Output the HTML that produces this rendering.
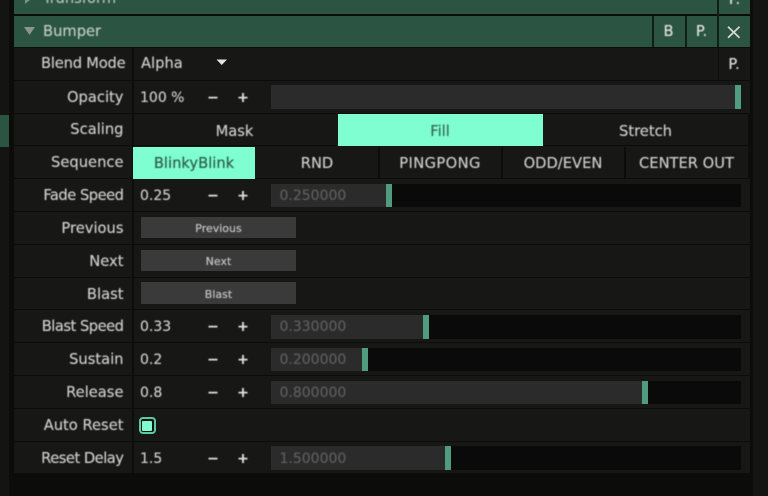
<!DOCTYPE html>
<html><head><meta charset="utf-8"><style>
html,body{margin:0;padding:0;background:#0c0c0c}
#p{position:relative;width:768px;height:496px;overflow:hidden;background:#0c0c0b;font-family:"DejaVu Sans","Liberation Sans",sans-serif;font-size:14.7px;color:#cbcbcb}
#p div{position:absolute}
.t{white-space:nowrap;filter:blur(.4px);line-height:20px;height:20px;transform:translateY(1px);text-shadow:0 0 .4px currentColor}
.l{right:644.5px;text-align:right}
.n{letter-spacing:-.5px}
.c{text-align:center}
.r{left:14px;width:736px;height:31.8px;background:#171716}
.sl{left:271px;width:470px;height:23.6px;background:#0a0a0a}
.f{left:271px;height:23.6px;background:#2b2b2b}
.h{width:6px;height:23.6px;background:#4f9c7e}
.v{left:140px;font-size:14px}
.g{left:279.5px;color:#5e5e5e;font-size:14px}
.b{left:141px;width:155px;height:21.6px;background:#3a3a3a}
.s{top:0;width:2px;background:#0c0c0b}
.x{font-size:11px;left:141px;width:155px;text-align:center;color:#c4c4c4}
.m{font-size:14px;font-weight:bold;color:#ddd}
</style></head><body><div id="p">
<div style="left:0;top:0;width:9px;height:496px;background:#141413"></div>
<div style="left:0;top:115px;width:9px;height:32px;background:#2c5443"></div>
<div style="left:753px;top:0;width:15px;height:496px;background:#141413"></div>

<div style="left:14px;top:0;width:736px;height:14px;background:#2b5442"></div>
<div style="left:14px;top:16px;width:736px;height:31px;background:#2b5442"></div>
<div style="left:717px;top:0;width:2px;height:47px;background:#0e1f18"></div>
<div style="left:652px;top:16px;width:2px;height:31px;background:#0e1f18"></div>
<div style="left:685px;top:16px;width:2px;height:31px;background:#0e1f18"></div>
<div class="t" style="left:43px;top:-12px;color:#b5bcb8">Transform</div>
<svg style="position:absolute;left:24px;top:0" width="10" height="5"><path d="M1 0H6L1 4Z" fill="#7d8f87"/></svg>
<svg style="position:absolute;left:23px;top:27px" width="13" height="10"><path d="M1 0H12L6.5 8Z" fill="#8a9490"/></svg>
<div class="t" style="left:43px;top:21px;color:#bfc9c4">Bumper</div>
<div class="t c" style="left:652px;width:33px;top:21px;color:#e0e0e0">B</div>
<div class="t c" style="left:685px;width:33px;top:21px;color:#e0e0e0">P.</div>
<div class="t c" style="left:718px;width:33px;top:-11px;color:#e0e0e0">P.</div>
<svg style="position:absolute;left:727px;top:26px" width="14" height="13"><path d="M1 .8L12.5 11.8M12.5 .8L1 11.8" stroke="#d8d8d8" stroke-width="1.7" fill="none"/></svg>

<div class="r" style="top:48px"></div>
<div class="r" style="top:80.8px"></div>
<div class="r" style="top:113.6px"></div>
<div class="r" style="top:146.4px"></div>
<div class="r" style="top:179.2px"></div>
<div class="r" style="top:212px"></div>
<div class="r" style="top:244.8px"></div>
<div class="r" style="top:277.6px"></div>
<div class="r" style="top:310.4px"></div>
<div class="r" style="top:343.2px"></div>
<div class="r" style="top:376px"></div>
<div class="r" style="top:408.8px"></div>
<div class="r" style="top:441.6px"></div>

<div style="left:132px;top:48px;width:1.5px;height:425px;background:#0d0d0c"></div>
<div style="left:717.5px;top:47px;width:1.5px;height:33px;background:#0d0d0c"></div>
<div style="left:748px;top:114px;width:2px;height:65px;background:#0d0d0c"></div>

<div class="t" style="left:41px;top:53px;letter-spacing:-.2px">Blend Mode</div>
<div class="t" style="left:141px;top:53px">Alpha</div>
<svg style="position:absolute;left:216px;top:59px" width="12" height="7"><path d="M.5 .5H11L5.7 6Z" fill="#e4e4e4"/></svg>
<div class="t c" style="left:718px;width:32px;top:54px;color:#ddd">P.</div>

<div class="t l" style="top:87px">Opacity</div>
<div class="t v" style="top:87px">100 %</div>
<div class="sl f" style="top:85px;width:470px"></div>
<div class="h" style="left:735px;top:85px"></div>

<div class="t l" style="top:119px">Scaling</div>
<div style="left:338px;top:114px;width:204.5px;height:31.5px;background:#7fffd1"></div>
<div class="t c" style="left:132px;width:205px;top:120.5px">Mask</div>
<div class="t c" style="left:338px;width:204px;top:120.5px;color:#3a6a58">Fill</div>
<div class="t c" style="left:543px;width:205px;top:120.5px">Stretch</div>

<div class="t l" style="top:152px">Sequence</div>
<div style="left:133px;top:147px;width:122px;height:31.5px;background:#7fffd1"></div>
<div class="s" style="left:378px;top:147px;height:32px"></div>
<div class="s" style="left:501px;top:147px;height:32px"></div>
<div class="s" style="left:624px;top:147px;height:32px"></div>
<div class="t c" style="left:133px;width:122px;top:153px;color:#2e5f4e">BlinkyBlink</div>
<div class="t c" style="left:256px;width:122px;top:153px">RND</div>
<div class="t c" style="left:379px;width:122px;top:153px;letter-spacing:.4px">PINGPONG</div>
<div class="t c" style="left:502px;width:122px;top:153px">ODD/EVEN</div>
<div class="t c" style="left:625px;width:123px;top:153px">CENTER OUT</div>

<div class="t l n" style="top:185px">Fade Speed</div>
<div class="t v" style="top:185px">0.25</div>
<div class="sl" style="top:183.5px"></div>
<div class="f" style="top:183.5px;width:115px"></div>
<div class="h" style="left:386px;top:183.5px"></div>
<div class="t g" style="top:185px">0.250000</div>

<div class="t l" style="top:218px">Previous</div>
<div class="b" style="top:216.8px"></div>
<div class="t x" style="top:217.5px">Previous</div>

<div class="t l" style="top:251px">Next</div>
<div class="b" style="top:249.6px"></div>
<div class="t x" style="top:250.5px">Next</div>

<div class="t l" style="top:284px">Blast</div>
<div class="b" style="top:282.4px"></div>
<div class="t x" style="top:283.5px">Blast</div>

<div class="t l n" style="top:316px">Blast Speed</div>
<div class="t v" style="top:316px">0.33</div>
<div class="sl" style="top:315px"></div>
<div class="f" style="top:315px;width:152px"></div>
<div class="h" style="left:423px;top:315px"></div>
<div class="t g" style="top:316px">0.330000</div>

<div class="t l" style="top:349px">Sustain</div>
<div class="t v" style="top:349px">0.2</div>
<div class="sl" style="top:347.8px"></div>
<div class="f" style="top:347.8px;width:91px"></div>
<div class="h" style="left:362px;top:347.8px"></div>
<div class="t g" style="top:349px">0.200000</div>

<div class="t l" style="top:382px">Release</div>
<div class="t v" style="top:382px">0.8</div>
<div class="sl" style="top:380.8px"></div>
<div class="f" style="top:380.8px;width:371px"></div>
<div class="h" style="left:642px;top:380.8px"></div>
<div class="t g" style="top:382px">0.800000</div>

<div class="t l" style="top:415px">Auto Reset</div>
<div style="left:138.5px;top:417px;width:13px;height:13px;border:2px solid #5fc9a2;border-radius:4px;background:#0f1412"></div>
<div style="left:142px;top:420.6px;width:10px;height:10px;border-radius:1px;background:#7fffd1"></div>

<div class="t l n" style="top:448px">Reset Delay</div>
<div class="t v" style="top:448px">1.5</div>
<div class="sl" style="top:446.4px"></div>
<div class="f" style="top:446.4px;width:174px"></div>
<div class="h" style="left:445px;top:446.4px"></div>
<div class="t g" style="top:448px">1.500000</div>

<div class="t c m" style="left:205px;width:16px;top:87px">−</div><div class="t c m" style="left:235px;width:16px;top:87px">+</div>
<div class="t c m" style="left:205px;width:16px;top:185px">−</div><div class="t c m" style="left:235px;width:16px;top:185px">+</div>
<div class="t c m" style="left:205px;width:16px;top:316px">−</div><div class="t c m" style="left:235px;width:16px;top:316px">+</div>
<div class="t c m" style="left:205px;width:16px;top:349px">−</div><div class="t c m" style="left:235px;width:16px;top:349px">+</div>
<div class="t c m" style="left:205px;width:16px;top:382px">−</div><div class="t c m" style="left:235px;width:16px;top:382px">+</div>
<div class="t c m" style="left:205px;width:16px;top:448px">−</div><div class="t c m" style="left:235px;width:16px;top:448px">+</div>
</div></body></html>
